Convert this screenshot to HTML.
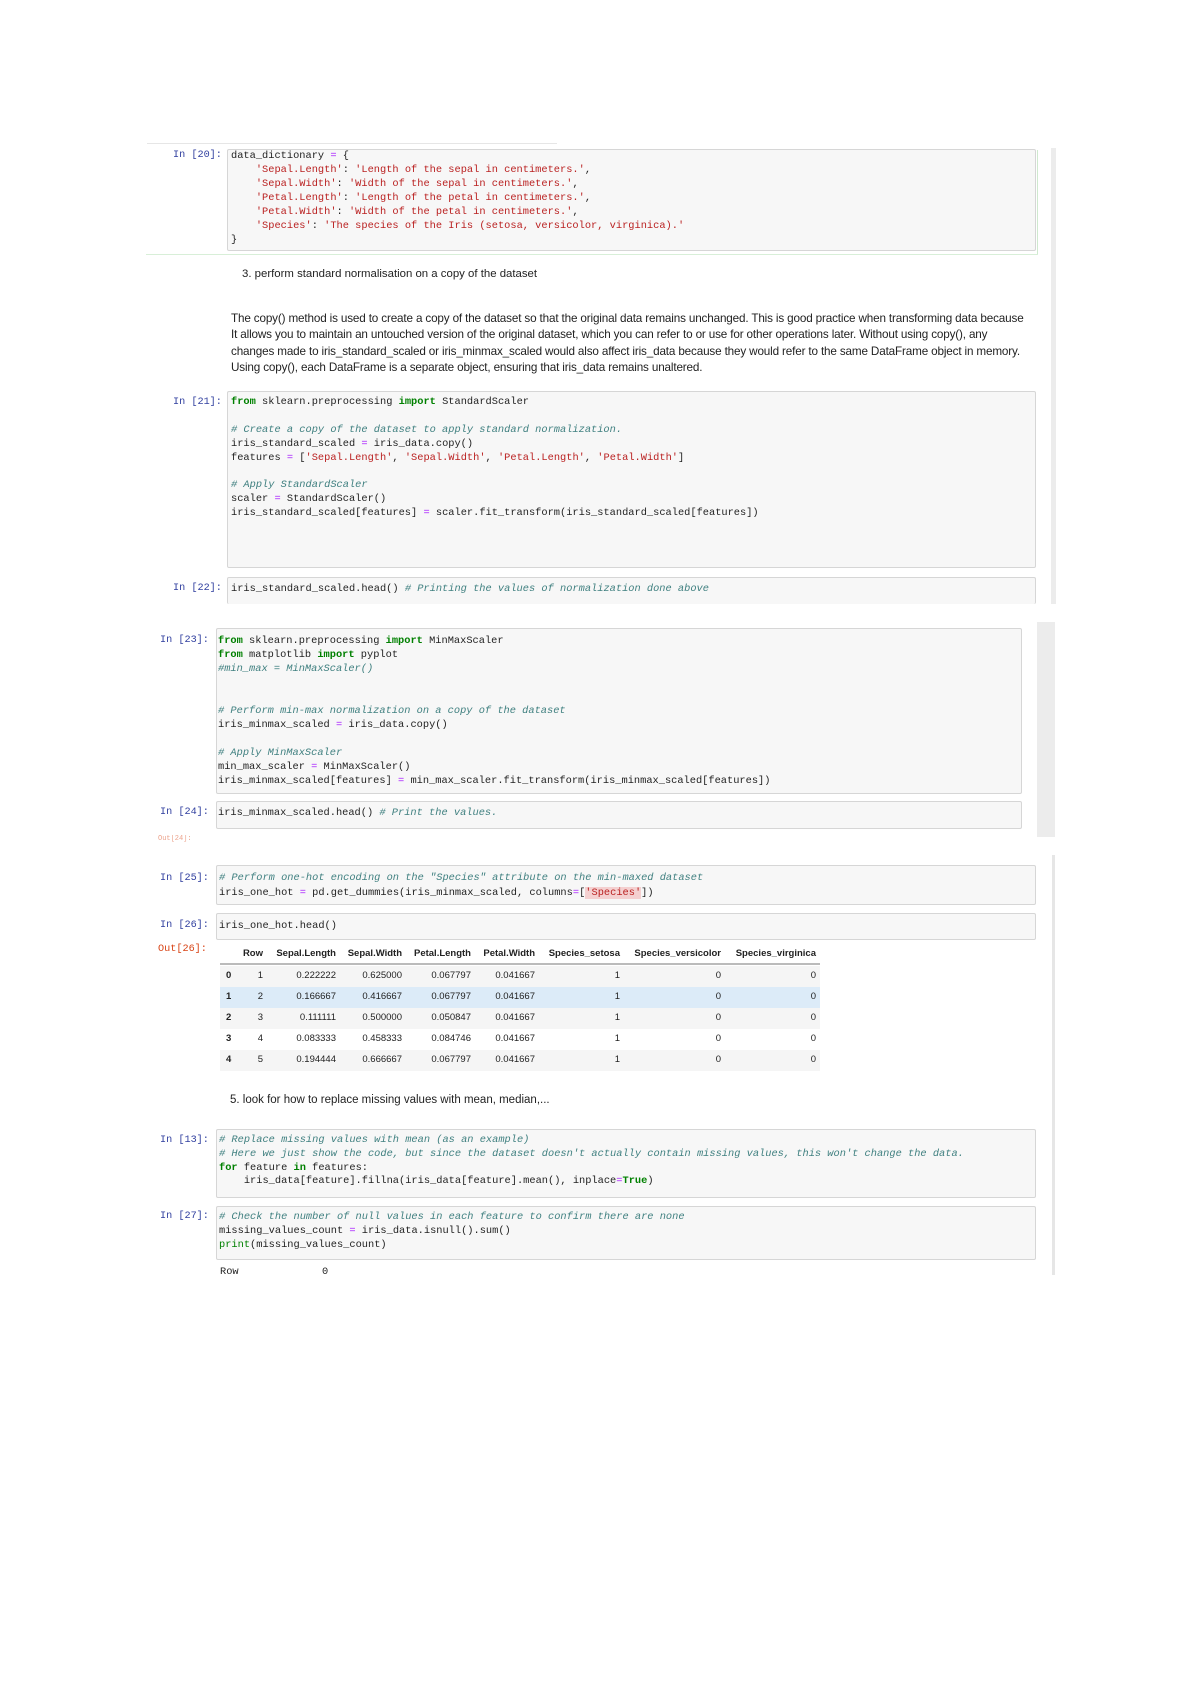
<!DOCTYPE html>
<html><head><meta charset="utf-8"><style>
body{margin:0;width:1200px;height:1696px;background:#fff;position:relative;overflow:hidden}
.a{position:absolute;white-space:pre;line-height:14px}
.m{font-family:"Liberation Mono",monospace;font-size:10.35px;color:#222}
.s{font-family:"Liberation Sans",sans-serif;font-size:11.4px;color:#222}
.p{font-family:"Liberation Mono",monospace;font-size:10.2px;color:#303f9f}
.o{font-family:"Liberation Mono",monospace;font-size:10.2px;color:#d84315}
.box{position:absolute;background:#f7f7f7;border:1px solid #d6d6d6;border-radius:2px}
.st{color:#ba2121}.k{color:#008000;font-weight:bold}.c{color:#408080;font-style:italic}.op{color:#aa22ff}
.t{font-family:"Liberation Sans",sans-serif;font-size:9.5px;color:#222;position:absolute;line-height:14px;white-space:nowrap}
.b{font-weight:bold}
</style></head><body>
<div style="position:absolute;left:147px;top:143px;width:410px;height:1px;background:#e6e6e6"></div>
<div style="position:absolute;left:146px;top:254px;width:892px;height:1px;background:#d8efd8"></div>
<div style="position:absolute;left:1037px;top:150px;width:1px;height:104px;background:#cfe9cf"></div>
<div style="position:absolute;left:1051px;top:148px;width:5px;height:456px;background:#ececec"></div>
<div style="position:absolute;left:1037px;top:622px;width:18px;height:215px;background:#ececec"></div>
<div style="position:absolute;left:1052px;top:855px;width:3px;height:420px;background:#e6e6e6"></div>

<!-- cell 20 -->
<div class="a p" style="left:173px;top:149px">In [20]:</div>
<div class="box" style="left:227px;top:149px;width:807px;height:100px"></div>
<div class="a m" style="left:231px;top:149px">data_dictionary <span class="op">=</span> {
    <span class="st">'Sepal.Length'</span>: <span class="st">'Length of the sepal in centimeters.'</span>,
    <span class="st">'Sepal.Width'</span>: <span class="st">'Width of the sepal in centimeters.'</span>,
    <span class="st">'Petal.Length'</span>: <span class="st">'Length of the petal in centimeters.'</span>,
    <span class="st">'Petal.Width'</span>: <span class="st">'Width of the petal in centimeters.'</span>,
    <span class="st">'Species'</span>: <span class="st">'The species of the Iris (setosa, versicolor, virginica).'</span>
}</div>

<div class="a s" style="left:242px;top:267px">3. perform standard normalisation on a copy of the dataset</div>
<div class="a s" style="left:231px;top:311px;line-height:16.3px;font-size:11.7px;letter-spacing:-0.15px">The copy() method is used to create a copy of the dataset so that the original data remains unchanged. This is good practice when transforming data because
It allows you to maintain an untouched version of the original dataset, which you can refer to or use for other operations later. Without using copy(), any
changes made to iris_standard_scaled or iris_minmax_scaled would also affect iris_data because they would refer to the same DataFrame object in memory.
Using copy(), each DataFrame is a separate object, ensuring that iris_data remains unaltered.</div>

<!-- cell 21 -->
<div class="a p" style="left:173px;top:396px">In [21]:</div>
<div class="box" style="left:227px;top:391px;width:807px;height:175px"></div>
<div class="a m" style="left:231px;top:396px;line-height:13.9px"><span class="k">from</span> sklearn.preprocessing <span class="k">import</span> StandardScaler

<span class="c"># Create a copy of the dataset to apply standard normalization.</span>
iris_standard_scaled <span class="op">=</span> iris_data.copy()
features <span class="op">=</span> [<span class="st">'Sepal.Length'</span>, <span class="st">'Sepal.Width'</span>, <span class="st">'Petal.Length'</span>, <span class="st">'Petal.Width'</span>]

<span class="c"># Apply StandardScaler</span>
scaler <span class="op">=</span> StandardScaler()
iris_standard_scaled[features] <span class="op">=</span> scaler.fit_transform(iris_standard_scaled[features])</div>

<!-- cell 22 -->
<div class="a p" style="left:173px;top:582px">In [22]:</div>
<div class="box" style="left:227px;top:577px;width:807px;height:26px;border-bottom:none"></div>
<div class="a m" style="left:231px;top:582px">iris_standard_scaled.head() <span class="c"># Printing the values of normalization done above</span></div>

<!-- cell 23 -->
<div class="a p" style="left:160px;top:634px">In [23]:</div>
<div class="box" style="left:216px;top:628px;width:804px;height:164px"></div>
<div class="a m" style="left:218px;top:634px;line-height:14px"><span class="k">from</span> sklearn.preprocessing <span class="k">import</span> MinMaxScaler
<span class="k">from</span> matplotlib <span class="k">import</span> pyplot
<span class="c">#min_max = MinMaxScaler()</span>


<span class="c"># Perform min-max normalization on a copy of the dataset</span>
iris_minmax_scaled <span class="op">=</span> iris_data.copy()

<span class="c"># Apply MinMaxScaler</span>
min_max_scaler <span class="op">=</span> MinMaxScaler()
iris_minmax_scaled[features] <span class="op">=</span> min_max_scaler.fit_transform(iris_minmax_scaled[features])</div>

<!-- cell 24 -->
<div class="a p" style="left:160px;top:806px">In [24]:</div>
<div class="box" style="left:216px;top:801px;width:804px;height:26px"></div>
<div class="a m" style="left:218px;top:806px">iris_minmax_scaled.head() <span class="c"># Print the values.</span></div>
<div class="a o" style="left:158px;top:832px;font-size:7px;opacity:.5">Out[24]:</div>

<!-- cell 25 -->
<div class="a p" style="left:160px;top:872px">In [25]:</div>
<div class="box" style="left:216px;top:865px;width:818px;height:38px"></div>
<div class="a m" style="left:219px;top:871px;line-height:14.5px"><span class="c"># Perform one-hot encoding on the "Species" attribute on the min-maxed dataset</span>
iris_one_hot <span class="op">=</span> pd.get_dummies(iris_minmax_scaled, columns<span class="op">=</span>[<span class="st" style="background:#f4d0d0">'Species'</span>])</div>

<!-- cell 26 -->
<div class="a p" style="left:160px;top:919px">In [26]:</div>
<div class="box" style="left:216px;top:913px;width:818px;height:25px"></div>
<div class="a m" style="left:219px;top:919px">iris_one_hot.head()</div>
<div class="a o" style="left:158px;top:943px">Out[26]:</div>

<!-- table -->
<div style="position:absolute;left:220px;top:963px;width:600px;height:2px;background:#bbb"></div>
<div style="position:absolute;left:220px;top:966px;width:600px;height:21px;background:#f5f5f5"></div>
<div style="position:absolute;left:220px;top:987px;width:600px;height:21px;background:#dcebf8"></div>
<div style="position:absolute;left:220px;top:1008px;width:600px;height:21px;background:#f5f5f5"></div>
<div style="position:absolute;left:220px;top:1050px;width:600px;height:21px;background:#f5f5f5"></div>
<div class="t b" style="right:937px;top:947px">Row</div>
<div class="t b" style="right:864px;top:947px">Sepal.Length</div>
<div class="t b" style="right:798px;top:947px">Sepal.Width</div>
<div class="t b" style="right:729px;top:947px">Petal.Length</div>
<div class="t b" style="right:665px;top:947px">Petal.Width</div>
<div class="t b" style="right:580px;top:947px">Species_setosa</div>
<div class="t b" style="right:479px;top:947px">Species_versicolor</div>
<div class="t b" style="right:384px;top:947px">Species_virginica</div>

<div class="t b" style="left:226px;top:969px">0</div><div class="t" style="right:937px;top:969px">1</div><div class="t" style="right:864px;top:969px">0.222222</div><div class="t" style="right:798px;top:969px">0.625000</div><div class="t" style="right:729px;top:969px">0.067797</div><div class="t" style="right:665px;top:969px">0.041667</div><div class="t" style="right:580px;top:969px">1</div><div class="t" style="right:479px;top:969px">0</div><div class="t" style="right:384px;top:969px">0</div>
<div class="t b" style="left:226px;top:990px">1</div><div class="t" style="right:937px;top:990px">2</div><div class="t" style="right:864px;top:990px">0.166667</div><div class="t" style="right:798px;top:990px">0.416667</div><div class="t" style="right:729px;top:990px">0.067797</div><div class="t" style="right:665px;top:990px">0.041667</div><div class="t" style="right:580px;top:990px">1</div><div class="t" style="right:479px;top:990px">0</div><div class="t" style="right:384px;top:990px">0</div>
<div class="t b" style="left:226px;top:1011px">2</div><div class="t" style="right:937px;top:1011px">3</div><div class="t" style="right:864px;top:1011px">0.111111</div><div class="t" style="right:798px;top:1011px">0.500000</div><div class="t" style="right:729px;top:1011px">0.050847</div><div class="t" style="right:665px;top:1011px">0.041667</div><div class="t" style="right:580px;top:1011px">1</div><div class="t" style="right:479px;top:1011px">0</div><div class="t" style="right:384px;top:1011px">0</div>
<div class="t b" style="left:226px;top:1032px">3</div><div class="t" style="right:937px;top:1032px">4</div><div class="t" style="right:864px;top:1032px">0.083333</div><div class="t" style="right:798px;top:1032px">0.458333</div><div class="t" style="right:729px;top:1032px">0.084746</div><div class="t" style="right:665px;top:1032px">0.041667</div><div class="t" style="right:580px;top:1032px">1</div><div class="t" style="right:479px;top:1032px">0</div><div class="t" style="right:384px;top:1032px">0</div>
<div class="t b" style="left:226px;top:1053px">4</div><div class="t" style="right:937px;top:1053px">5</div><div class="t" style="right:864px;top:1053px">0.194444</div><div class="t" style="right:798px;top:1053px">0.666667</div><div class="t" style="right:729px;top:1053px">0.067797</div><div class="t" style="right:665px;top:1053px">0.041667</div><div class="t" style="right:580px;top:1053px">1</div><div class="t" style="right:479px;top:1053px">0</div><div class="t" style="right:384px;top:1053px">0</div>

<div class="a s" style="left:230px;top:1093px;font-size:11.5px">5. look for how to replace missing values with mean, median,...</div>

<!-- cell 13 -->
<div class="a p" style="left:160px;top:1134px">In [13]:</div>
<div class="box" style="left:216px;top:1129px;width:818px;height:67px"></div>
<div class="a m" style="left:219px;top:1134px;line-height:13.8px"><span class="c"># Replace missing values with mean (as an example)</span>
<span class="c"># Here we just show the code, but since the dataset doesn't actually contain missing values, this won't change the data.</span>
<span class="k">for</span> feature <span class="k">in</span> features:
    iris_data[feature].fillna(iris_data[feature].mean(), inplace<span class="op">=</span><span class="k">True</span>)</div>

<!-- cell 27 -->
<div class="a p" style="left:160px;top:1210px">In [27]:</div>
<div class="box" style="left:216px;top:1206px;width:818px;height:52px"></div>
<div class="a m" style="left:219px;top:1210px;line-height:14px"><span class="c"># Check the number of null values in each feature to confirm there are none</span>
missing_values_count <span class="op">=</span> iris_data.isnull().sum()
<span class="k" style="font-weight:normal">print</span>(missing_values_count)</div>
<div class="a m" style="left:220px;top:1265px">Row</div>
<div class="a m" style="left:322px;top:1265px">0</div>
</body></html>
